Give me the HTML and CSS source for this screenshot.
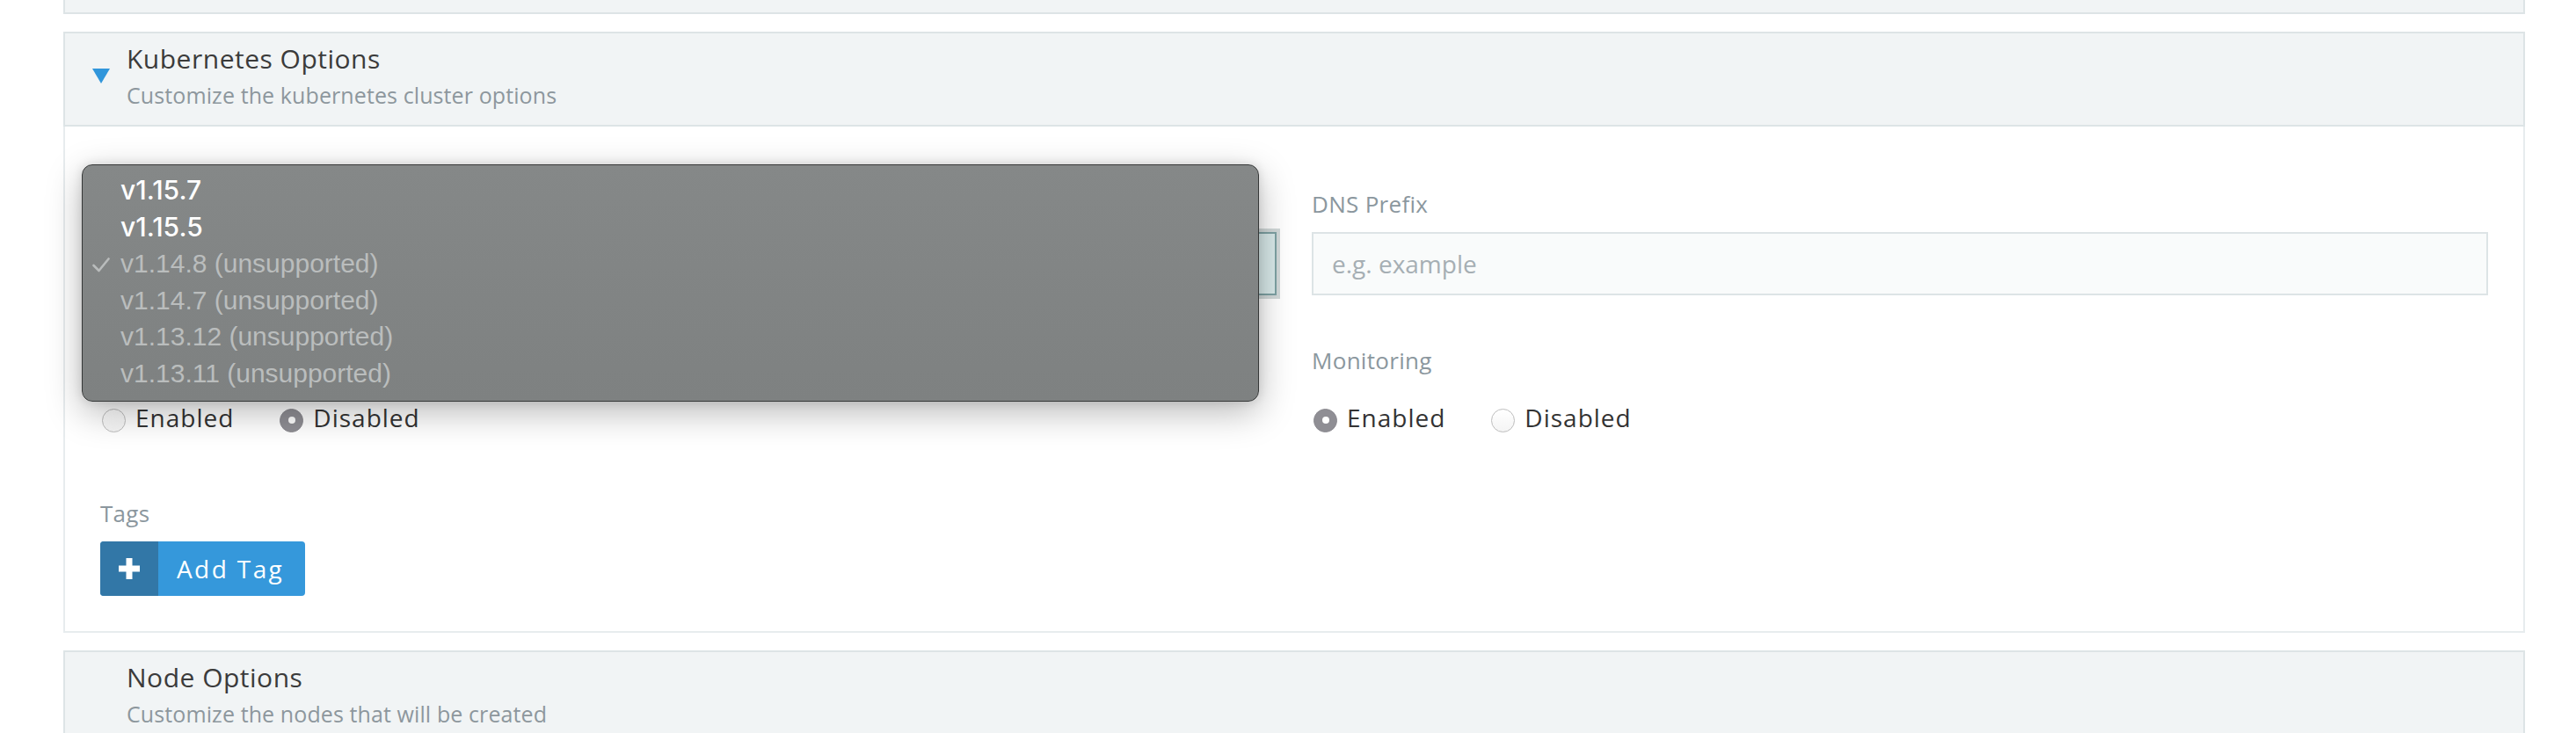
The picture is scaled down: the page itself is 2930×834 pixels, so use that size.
FILE: index.html
```html
<!DOCTYPE html>
<html>

<head>
    <title>Cluster Options</title>
    <link rel="stylesheet" href="styles.css">
</head>

<body>
    <div class="page">
        <div class="accordion-stub"></div>

        <section class="accordion open">
            <div class="accordion-header">
                <svg class="caret" width="20" height="17" viewBox="0 0 20 17">
                    <polygon points="0,0 20,0 10,17" fill="#3196db"></polygon>
                </svg>
                <div class="accordion-heading">
                    <h4 class="accordion-title">Kubernetes Options</h4>
                    <p class="accordion-sub">Customize the kubernetes cluster options</p>
                </div>
            </div>
            <div class="accordion-body">
                <div class="row">
                    <div class="col">
                        <!-- label sits under the open menu -->
                        <label class="field-label" aria-label="Kubernetes Version"></label>
                        <div class="select-wrap">
                            <div class="form-control focused" aria-label="v1.14.8 (unsupported)"></div>
                            <ul class="popup-menu">
                                <li class="menu-item">v1.15.7</li>
                                <li class="menu-item">v1.15.5</li>
                                <li class="menu-item disabled checked">
                                    <svg class="check" width="20" height="17" viewBox="0 0 20 17">
                                        <polyline points="1.5,9 7.5,15 18.5,1.5" fill="none" stroke="#b9bcbc"
                                            stroke-width="2.6" stroke-linecap="round" stroke-linejoin="round"></polyline>
                                    </svg>
                                    v1.14.8 (unsupported)
                                </li>
                                <li class="menu-item disabled">v1.14.7 (unsupported)</li>
                                <li class="menu-item disabled">v1.13.12 (unsupported)</li>
                                <li class="menu-item disabled">v1.13.11 (unsupported)</li>
                            </ul>
                        </div>
                    </div>
                    <div class="col">
                        <label class="field-label" for="dnsPrefix">DNS Prefix</label>
                        <input class="form-control" type="text" id="dnsPrefix" placeholder="e.g. example">
                    </div>
                </div>

                <div class="row">
                    <div class="col">
                        <label class="field-label" aria-label="HTTP Application Routing"></label>
                        <div class="radio-group">
                            <span class="radio"><span class="radio-dot"></span>Enabled</span>
                            <span class="radio"><span class="radio-dot checked"></span>Disabled</span>
                        </div>
                    </div>
                    <div class="col">
                        <label class="field-label">Monitoring</label>
                        <div class="radio-group">
                            <span class="radio"><span class="radio-dot checked"></span>Enabled</span>
                            <span class="radio"><span class="radio-dot"></span>Disabled</span>
                        </div>
                    </div>
                </div>

                <div class="tags">
                    <label class="field-label">Tags</label>
                    <button type="button" class="btn-add">
                        <span class="btn-icon">
                            <svg width="24" height="24" viewBox="0 0 24 24">
                                <rect x="8.5" y="0" width="7" height="24" fill="#fff"></rect>
                                <rect x="0" y="8.5" width="24" height="7" fill="#fff"></rect>
                            </svg>
                        </span>
                        <span class="btn-text">Add Tag</span>
                    </button>
                </div>
            </div>
        </section>

        <section class="accordion">
            <div class="accordion-header">
                <div class="caret-space"></div>
                <div class="accordion-heading">
                    <h4 class="accordion-title">Node Options</h4>
                    <p class="accordion-sub">Customize the nodes that will be created</p>
                </div>
            </div>
        </section>
    </div>
</body>

</html>
```

FILE: styles.css
```css
body {
    margin: 0;
    font-family: "Open Sans", Arial, sans-serif;
    background-color: #fff;
    color: #333;
    overflow: hidden;
}

.page {
    margin: 0 58px 0 72px;
}

.accordion-stub {
    height: 14px;
    background-color: #f1f4f5;
    border: 2px solid #dde4e6;
    border-top: none;
}

.accordion {
    margin-top: 20px;
}

.accordion-header {
    display: flex;
    align-items: center;
    padding: 9px 0 16px 31px;
    background-color: #f1f4f5;
    border: 2px solid #dde4e6;
}

.caret,
.caret-space {
    width: 20px;
    height: 17px;
    margin-right: 19px;
    flex-shrink: 0;
}

.accordion-title {
    margin: 0;
    font-size: 30px;
    line-height: 40px;
    font-weight: 400;
    color: #3b3b3b;
    letter-spacing: 0.5px;
}

.accordion-sub {
    margin: 3px 0 0;
    font-size: 25px;
    line-height: 36px;
    color: #8d979d;
    letter-spacing: 0.1px;
}

.accordion-body {
    padding: 70px 40px 40px;
    border: 2px solid #e7ecee;
    border-top: none;
}

.row {
    display: grid;
    grid-template-columns: 1fr 1fr;
    column-gap: 40px;
    margin-bottom: 56px;
}

.field-label {
    display: block;
    min-height: 36px;
    margin-bottom: 14px;
    font-size: 26px;
    line-height: 36px;
    color: #8b979e;
    letter-spacing: 0.3px;
}

.form-control {
    display: block;
    box-sizing: border-box;
    width: 100%;
    height: 72px;
    margin: 0;
    padding: 0 21px;
    font-family: "Open Sans", Arial, sans-serif;
    font-size: 28px;
    color: #333;
    background-color: #f9fbfb;
    border: 2px solid #dde4e6;
    border-radius: 0;
    outline: none;
}

.form-control::placeholder {
    color: #a6afb4;
}

.form-control.focused {
    background-color: #d9eaea;
    border-color: #7ea2a4;
    box-shadow: 0 0 0 4px #d2d9d9;
}

.select-wrap {
    position: relative;
}

/* native popup menu, opened over the select */
.popup-menu {
    position: absolute;
    top: -77px;
    left: -21px;
    right: 20px;
    z-index: 10;
    margin: 0;
    padding: 8px 0 11px;
    list-style: none;
    background: linear-gradient(#858888, #7e8181);
    border: 1px solid #363838;
    border-radius: 12px;
    box-shadow: 0 12px 40px rgba(0, 0, 0, 0.28), 0 0 12px rgba(0, 0, 0, 0.12);
}

.menu-item {
    position: relative;
    padding-left: 43px;
    font-family: Inter, "Liberation Sans", sans-serif;
    font-size: 30px;
    line-height: 41.5px;
    font-weight: 500;
    color: #fff;
}

.menu-item.disabled {
    font-family: "Liberation Sans", Arial, sans-serif;
    font-weight: 400;
    color: #babdbd;
}

.check {
    position: absolute;
    left: 11px;
    top: 14px;
}

.radio-group {
    display: flex;
    align-items: center;
    padding: 13px 0 15px;
}

.radio {
    display: flex;
    align-items: center;
    margin-right: 50px;
    font-size: 28px;
    line-height: 40px;
    color: #333;
    letter-spacing: 1px;
}

.radio-dot {
    box-sizing: border-box;
    width: 27px;
    height: 27px;
    margin: 6px 11px 0 2px;
    border: 1px solid #bdbdbd;
    border-radius: 50%;
    background: linear-gradient(#fff, #f4f4f4);
    display: flex;
    align-items: center;
    justify-content: center;
}

.radio-dot.checked {
    border-color: #8b8a90;
    background: #8f8e94;
}

.radio-dot.checked::after {
    content: "";
    width: 8px;
    height: 8px;
    border-radius: 50%;
    background-color: #fff;
}

.btn-add {
    display: flex;
    align-items: stretch;
    height: 62px;
    padding: 0;
    border: none;
    border-radius: 4px;
    overflow: hidden;
    background-color: #3598db;
    cursor: pointer;
}

.btn-icon {
    display: flex;
    align-items: center;
    justify-content: center;
    width: 66px;
    background-color: #3277a7;
}

.btn-text {
    display: flex;
    align-items: center;
    padding: 0 24px 0 21px;
    font-family: "Open Sans", Arial, sans-serif;
    font-size: 28px;
    color: #fff;
    letter-spacing: 2.4px;
}
```
